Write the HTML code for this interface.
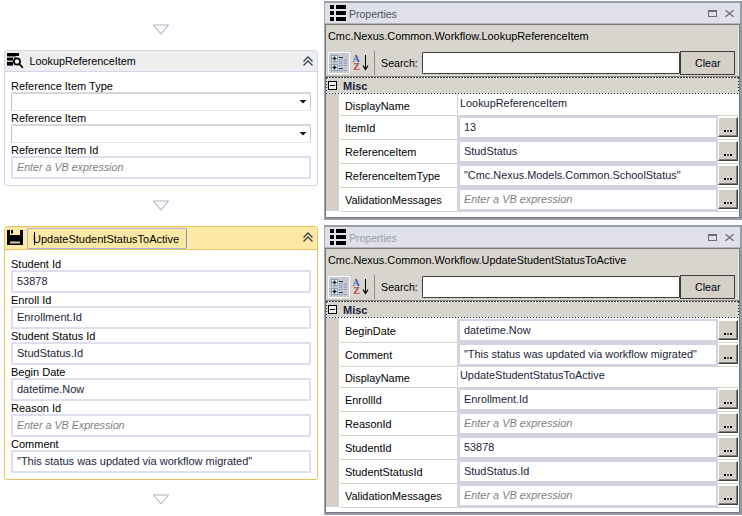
<!DOCTYPE html>
<html><head><meta charset="utf-8">
<style>
*{margin:0;padding:0;box-sizing:border-box}
html,body{width:742px;height:516px;overflow:hidden;background:#fff;font-family:"Liberation Sans",sans-serif}
.a{position:absolute}
.t{position:absolute;white-space:nowrap;font-size:11px;line-height:13px;color:#000}
.g{font-size:10.9px}
.v{color:#1b2538}
.ph{font-style:italic;color:#7f7f7f}
</style></head><body>

<svg class="a" style="left:0;top:0" width="320" height="516">
<path d="M153.5 25 L168.5 25 L161 34 Z" fill="none" stroke="#a9b3c5" stroke-width="1.1" stroke-linejoin="round"/>
<path d="M153.5 201 L168.5 201 L161 210 Z" fill="none" stroke="#a9b3c5" stroke-width="1.1" stroke-linejoin="round"/>
<path d="M153.5 495 L168.5 495 L161 504 Z" fill="none" stroke="#a9b3c5" stroke-width="1.1" stroke-linejoin="round"/>
</svg>
<div class="a" style="left:4px;top:50px;width:314px;height:136px;border:1px solid #d3d6e8;border-radius:3px;background:#fff"></div>
<div class="a" style="left:5px;top:51px;width:312px;height:21px;background:#eeeeee;border-bottom:1px solid #d3d6e8;border-radius:2px 2px 0 0"></div>
<svg class="a" style="left:0;top:46px" width="30" height="26">
<rect x="7" y="7" width="12" height="3" fill="#000"/>
<rect x="7" y="10" width="9" height="2" fill="#8c8c8c"/>
<rect x="7" y="12" width="6" height="2.6" fill="#000"/>
<rect x="7" y="14.6" width="6" height="1" fill="#9a9a9a"/>
<rect x="7" y="16" width="6" height="3.6" fill="#000"/>
<circle cx="17" cy="15.5" r="3.1" fill="#f4f4f4" stroke="#000" stroke-width="1.7"/>
<path d="M19.3 18 L22.3 21.2" stroke="#000" stroke-width="1.8" stroke-linecap="round"/>
</svg>
<div class="t " style="left:29.5px;top:54.5px;font-size:10.8px">LookupReferenceItem</div>
<svg class="a" style="left:300px;top:53px" width="16" height="16"><path d="M3.5 8.5 L8 4 L12.5 8.5 M3.5 12.5 L8 8 L12.5 12.5" fill="none" stroke="#3a4657" stroke-width="1.4"/></svg>
<div class="t " style="left:11px;top:79.5px;">Reference Item Type</div>
<div class="a" style="left:11px;top:92px;width:300px;height:19px;border:1px solid #e4e4ea;border-left-color:#bcbfcd;border-right-color:#c4c6d0;border-top:2px solid #d6d6da;border-radius:2px;background:#fff"></div>
<svg class="a" style="left:299px;top:99px" width="9" height="6"><path d="M0.5 1 L7.5 1 L4 4.5 Z" fill="#15182a"/></svg>
<div class="t " style="left:11px;top:111.5px;">Reference Item</div>
<div class="a" style="left:11px;top:124px;width:300px;height:19px;border:1px solid #e4e4ea;border-left-color:#bcbfcd;border-right-color:#c4c6d0;border-top:2px solid #d6d6da;border-radius:2px;background:#fff"></div>
<svg class="a" style="left:299px;top:131px" width="9" height="6"><path d="M0.5 1 L7.5 1 L4 4.5 Z" fill="#15182a"/></svg>
<div class="t " style="left:11px;top:143.5px;">Reference Item Id</div>
<div class="a" style="left:11px;top:156px;width:300px;height:23px;border:2px solid #dedeee;border-radius:1px;background:#fff"></div>
<div class="t ph" style="left:17px;top:160.5px;font-size:10.7px">Enter a VB expression</div>
<div class="a" style="left:4px;top:226px;width:314px;height:254px;border:1px solid #e9c262;border-radius:3px;background:#fff"></div>
<div class="a" style="left:5px;top:227px;width:312px;height:23px;background:#fde8a6;border-bottom:1px solid #e9c262;border-radius:2px 2px 0 0"></div>
<svg class="a" style="left:7px;top:230px" width="16" height="16">
<path d="M0 0 H3 V5 H13 V0 H16 V15 H0 Z" fill="#000"/>
<rect x="4" y="0" width="2" height="3.5" fill="#000"/>
<rect x="3" y="11.5" width="10" height="2" fill="#dccb94"/>
</svg>
<div class="a" style="left:27px;top:228px;width:160px;height:21px;border:1px solid #a2b1da;border-right-color:#8494c8;border-radius:2px;background:#fde8a6"></div>
<div class="a" style="left:34px;top:232px;width:1px;height:13px;background:#111"></div>
<div class="t " style="left:33px;top:232.5px;">UpdateStudentStatusToActive</div>
<svg class="a" style="left:300px;top:229px" width="16" height="16"><path d="M3.5 8.5 L8 4 L12.5 8.5 M3.5 12.5 L8 8 L12.5 12.5" fill="none" stroke="#3a4657" stroke-width="1.4"/></svg>
<div class="t " style="left:11px;top:257.5px;">Student Id</div>
<div class="a" style="left:11px;top:270px;width:300px;height:23px;border:2px solid #dedeee;border-radius:1px;background:#fff"></div>
<div class="t v" style="left:17px;top:274.5px;">53878</div>
<div class="t " style="left:11px;top:293.5px;">Enroll Id</div>
<div class="a" style="left:11px;top:306px;width:300px;height:23px;border:2px solid #dedeee;border-radius:1px;background:#fff"></div>
<div class="t v" style="left:17px;top:310.5px;">Enrollment.Id</div>
<div class="t " style="left:11px;top:329.5px;">Student Status Id</div>
<div class="a" style="left:11px;top:342px;width:300px;height:23px;border:2px solid #dedeee;border-radius:1px;background:#fff"></div>
<div class="t v" style="left:17px;top:346.5px;">StudStatus.Id</div>
<div class="t " style="left:11px;top:365.5px;">Begin Date</div>
<div class="a" style="left:11px;top:378px;width:300px;height:23px;border:2px solid #dedeee;border-radius:1px;background:#fff"></div>
<div class="t v" style="left:17px;top:382.5px;">datetime.Now</div>
<div class="t " style="left:11px;top:401.5px;">Reason Id</div>
<div class="a" style="left:11px;top:414px;width:300px;height:23px;border:2px solid #dedeee;border-radius:1px;background:#fff"></div>
<div class="t ph" style="left:17px;top:418.5px;font-size:10.7px">Enter a VB Expression</div>
<div class="t " style="left:11px;top:437.5px;">Comment</div>
<div class="a" style="left:11px;top:450px;width:300px;height:23px;border:2px solid #dedeee;border-radius:1px;background:#fff"></div>
<div class="t v" style="left:17px;top:454.5px;">"This status was updated via workflow migrated"</div>
<div class="a" style="left:324px;top:1px;width:418px;height:219px;border:2px solid #979ca8;border-left:1px solid #a3a9b6;background:#e0e0e9"></div>
<div class="a" style="left:325px;top:25px;width:415px;height:193px;border:1px solid #77787d;border-top:0;background:#d8d5cf"></div>
<div class="a" style="left:325px;top:23px;width:415px;height:1px;background:#b4b5bc"></div>
<div class="a" style="left:325px;top:24px;width:415px;height:1px;background:#78797e"></div>
<svg class="a" style="left:330px;top:5px" width="17" height="16">
<rect x="0" y="0" width="4" height="4" fill="#000"/><rect x="6" y="0" width="10" height="4" fill="#000"/>
<rect x="0" y="6" width="4" height="4" fill="#000"/><rect x="6" y="6" width="10" height="4" fill="#000"/>
<rect x="0" y="12" width="4" height="4" fill="#000"/><rect x="6" y="12" width="10" height="4" fill="#000"/>
</svg>
<div class="t " style="left:349px;top:7.5px;font-size:10.5px;color:#4e5567">Properties</div>
<svg class="a" style="left:706px;top:8px" width="32" height="12">
<rect x="2.5" y="2.5" width="8" height="6" fill="none" stroke="#6c6c74" stroke-width="1"/><rect x="2" y="2" width="9" height="2" fill="#6c6c74"/>
<path d="M19.6 2.3 L27.6 8.8 M27.6 2.3 L19.6 8.8" stroke="#6c6c74" stroke-width="1.3"/>
</svg>
<div class="a" style="left:738px;top:25px;width:1px;height:191px;background:#efede9"></div>
<div class="t " style="left:328px;top:29.5px;font-size:10.9px">Cmc.Nexus.Common.Workflow.LookupReferenceItem</div>
<svg class="a" style="left:328px;top:51px" width="48" height="25">
<rect x="0.5" y="1.5" width="21" height="21" fill="#c9c8cc" stroke="#fff" stroke-width="1"/>
<rect x="3.5" y="4.5" width="6" height="6" fill="#fff" stroke="#7aa0c8" stroke-width="1"/>
<path d="M6.5 5.5 V9.5 M4.5 7.5 H8.5" stroke="#000" stroke-width="1.4"/>
<rect x="3.5" y="13.5" width="6" height="6" fill="#fff" stroke="#7aa0c8" stroke-width="1"/>
<path d="M6.5 14.5 V18.5 M4.5 16.5 H8.5" stroke="#000" stroke-width="1.4"/>
<rect x="11" y="6" width="4" height="1" fill="#333"/>
<rect x="11" y="8" width="4" height="1" fill="#8aa4cc"/><rect x="16" y="8" width="3" height="1" fill="#8aa4cc"/>
<rect x="11" y="10" width="4" height="1" fill="#8aa4cc"/><rect x="16" y="10" width="3" height="1" fill="#8aa4cc"/>
<rect x="11" y="12" width="4" height="1" fill="#8aa4cc"/><rect x="16" y="12" width="3" height="1" fill="#8aa4cc"/>
<rect x="11" y="14" width="4" height="1" fill="#8aa4cc"/><rect x="16" y="14" width="3" height="1" fill="#8aa4cc"/>
<rect x="11" y="17" width="4" height="1" fill="#333"/>
<rect x="11" y="19" width="4" height="1" fill="#8aa4cc"/><rect x="16" y="19" width="3" height="1" fill="#8aa4cc"/>
<text x="24.6" y="11" font-family="Liberation Serif" font-weight="bold" font-size="10" fill="#3a62b6">A</text>
<text x="25.2" y="19" font-family="Liberation Serif" font-weight="bold" font-size="10" fill="#b4403c">Z</text>
<path d="M37.5 4 V17" stroke="#000" stroke-width="1"/><path d="M35 14.5 L37.5 18.5 L40 14.5" fill="none" stroke="#000" stroke-width="1.2"/>
<rect x="46" y="0" width="1" height="24" fill="#8c8c8c"/>
</svg>
<div class="t " style="left:381px;top:56.5px;font-size:10.7px">Search:</div>
<div class="a" style="left:422px;top:52px;width:258px;height:22px;border:1px solid #3f3f3f;border-radius:1px;background:#fff"></div>
<div class="a" style="left:680px;top:51px;width:55px;height:24px;border:1px solid #3c3c3c;background:#d4d0c8"></div>
<div class="t " style="left:695px;top:56.5px;font-size:10.7px">Clear</div>
<div class="a" style="left:326px;top:94px;width:413px;height:123px;background:#fff"></div>
<div class="a" style="left:326px;top:76px;width:413px;height:1px;background:#8a8a8a"></div>
<div class="a" style="left:326px;top:77px;width:413px;height:1px;background:repeating-linear-gradient(90deg,#3a3a3a 0 2px,#f4f4f4 2px 3px)"></div>
<div class="a" style="left:326px;top:93px;width:413px;height:1px;background:repeating-linear-gradient(90deg,#222 0 1px,#f0f0f0 1px 3px)"></div>
<div class="a" style="left:326px;top:78px;width:1px;height:15px;background:repeating-linear-gradient(180deg,#222 0 1px,#f0f0f0 1px 3px)"></div>
<div class="a" style="left:738px;top:78px;width:1px;height:15px;background:repeating-linear-gradient(180deg,#222 0 1px,#f0f0f0 1px 3px)"></div>
<div class="a" style="left:328px;top:81px;width:9px;height:9px;border:1px solid #000;background:#f2f2f2"></div>
<div class="a" style="left:330px;top:85px;width:5px;height:1px;background:#000"></div>
<div class="t " style="left:343px;top:79.5px;font-weight:bold;font-size:11px;color:#1d1c3c">Misc</div>
<div class="a" style="left:326px;top:94px;width:13px;height:117px;background:#d4d0c8"></div>
<div class="a" style="left:457px;top:94px;width:1px;height:117px;background:#d8d4cc"></div>
<div class="a" style="left:340px;top:115px;width:398px;height:1px;background:#d8d4cc"></div>
<div class="t g" style="left:345px;top:99.5px;">DisplayName</div>
<div class="t g v" style="left:460px;top:96.5px;">LookupReferenceItem</div>
<div class="a" style="left:340px;top:139px;width:398px;height:1px;background:#d8d4cc"></div>
<div class="t g" style="left:345px;top:121.5px;">ItemId</div>
<div class="a" style="left:458px;top:116px;width:260px;height:23px;border:2px solid #d2d2e6;border-radius:1px;background:#fff"></div>
<div class="t g v" style="left:464px;top:120.5px;">13</div>
<div class="a" style="left:718px;top:117px;width:20px;height:20px;background:#d4d0c8;border-top:1px solid #fff;border-left:1px solid #fff;border-right:1px solid #404040;border-bottom:1px solid #404040;box-shadow:inset -1px -1px 0 #808080"></div>
<svg class="a" style="left:723px;top:130px" width="10" height="3"><rect x="1" y="0" width="2" height="2" fill="#000"/><rect x="4" y="0" width="2" height="2" fill="#555"/><rect x="7" y="0" width="2" height="2" fill="#000"/></svg>
<div class="a" style="left:340px;top:163px;width:398px;height:1px;background:#d8d4cc"></div>
<div class="t g" style="left:345px;top:145.5px;">ReferenceItem</div>
<div class="a" style="left:458px;top:140px;width:260px;height:23px;border:2px solid #d2d2e6;border-radius:1px;background:#fff"></div>
<div class="t g v" style="left:464px;top:144.5px;">StudStatus</div>
<div class="a" style="left:718px;top:141px;width:20px;height:20px;background:#d4d0c8;border-top:1px solid #fff;border-left:1px solid #fff;border-right:1px solid #404040;border-bottom:1px solid #404040;box-shadow:inset -1px -1px 0 #808080"></div>
<svg class="a" style="left:723px;top:154px" width="10" height="3"><rect x="1" y="0" width="2" height="2" fill="#000"/><rect x="4" y="0" width="2" height="2" fill="#555"/><rect x="7" y="0" width="2" height="2" fill="#000"/></svg>
<div class="a" style="left:340px;top:187px;width:398px;height:1px;background:#d8d4cc"></div>
<div class="t g" style="left:345px;top:169.5px;">ReferenceItemType</div>
<div class="a" style="left:458px;top:164px;width:260px;height:23px;border:2px solid #d2d2e6;border-radius:1px;background:#fff"></div>
<div class="t g v" style="left:464px;top:168.5px;">"Cmc.Nexus.Models.Common.SchoolStatus"</div>
<div class="a" style="left:718px;top:165px;width:20px;height:20px;background:#d4d0c8;border-top:1px solid #fff;border-left:1px solid #fff;border-right:1px solid #404040;border-bottom:1px solid #404040;box-shadow:inset -1px -1px 0 #808080"></div>
<svg class="a" style="left:723px;top:178px" width="10" height="3"><rect x="1" y="0" width="2" height="2" fill="#000"/><rect x="4" y="0" width="2" height="2" fill="#555"/><rect x="7" y="0" width="2" height="2" fill="#000"/></svg>
<div class="a" style="left:340px;top:211px;width:398px;height:1px;background:#d8d4cc"></div>
<div class="t g" style="left:345px;top:193.5px;">ValidationMessages</div>
<div class="a" style="left:458px;top:188px;width:260px;height:23px;border:2px solid #d2d2e6;border-radius:1px;background:#fff"></div>
<div class="t g ph" style="left:464px;top:192.5px;">Enter a VB expression</div>
<div class="a" style="left:718px;top:189px;width:20px;height:20px;background:#d4d0c8;border-top:1px solid #fff;border-left:1px solid #fff;border-right:1px solid #404040;border-bottom:1px solid #404040;box-shadow:inset -1px -1px 0 #808080"></div>
<svg class="a" style="left:723px;top:202px" width="10" height="3"><rect x="1" y="0" width="2" height="2" fill="#000"/><rect x="4" y="0" width="2" height="2" fill="#555"/><rect x="7" y="0" width="2" height="2" fill="#000"/></svg>
<div class="a" style="left:324px;top:225px;width:418px;height:290px;border:2px solid #979ca8;border-left:1px solid #a3a9b6;background:#e0e0e9"></div>
<div class="a" style="left:325px;top:249px;width:415px;height:264px;border:1px solid #77787d;border-top:0;background:#d8d5cf"></div>
<div class="a" style="left:325px;top:247px;width:415px;height:1px;background:#b4b5bc"></div>
<div class="a" style="left:325px;top:248px;width:415px;height:1px;background:#78797e"></div>
<svg class="a" style="left:330px;top:229px" width="17" height="16">
<rect x="0" y="0" width="4" height="4" fill="#000"/><rect x="6" y="0" width="10" height="4" fill="#000"/>
<rect x="0" y="6" width="4" height="4" fill="#000"/><rect x="6" y="6" width="10" height="4" fill="#000"/>
<rect x="0" y="12" width="4" height="4" fill="#000"/><rect x="6" y="12" width="10" height="4" fill="#000"/>
</svg>
<div class="t " style="left:349px;top:231.5px;font-size:10.5px;color:#9a9fae">Properties</div>
<svg class="a" style="left:706px;top:232px" width="32" height="12">
<rect x="2.5" y="2.5" width="8" height="6" fill="none" stroke="#6c6c74" stroke-width="1"/><rect x="2" y="2" width="9" height="2" fill="#6c6c74"/>
<path d="M19.6 2.3 L27.6 8.8 M27.6 2.3 L19.6 8.8" stroke="#6c6c74" stroke-width="1.3"/>
</svg>
<div class="a" style="left:738px;top:249px;width:1px;height:262px;background:#efede9"></div>
<div class="t " style="left:328px;top:253.5px;font-size:10.9px">Cmc.Nexus.Common.Workflow.UpdateStudentStatusToActive</div>
<svg class="a" style="left:328px;top:275px" width="48" height="25">
<rect x="0.5" y="1.5" width="21" height="21" fill="#c9c8cc" stroke="#fff" stroke-width="1"/>
<rect x="3.5" y="4.5" width="6" height="6" fill="#fff" stroke="#7aa0c8" stroke-width="1"/>
<path d="M6.5 5.5 V9.5 M4.5 7.5 H8.5" stroke="#000" stroke-width="1.4"/>
<rect x="3.5" y="13.5" width="6" height="6" fill="#fff" stroke="#7aa0c8" stroke-width="1"/>
<path d="M6.5 14.5 V18.5 M4.5 16.5 H8.5" stroke="#000" stroke-width="1.4"/>
<rect x="11" y="6" width="4" height="1" fill="#333"/>
<rect x="11" y="8" width="4" height="1" fill="#8aa4cc"/><rect x="16" y="8" width="3" height="1" fill="#8aa4cc"/>
<rect x="11" y="10" width="4" height="1" fill="#8aa4cc"/><rect x="16" y="10" width="3" height="1" fill="#8aa4cc"/>
<rect x="11" y="12" width="4" height="1" fill="#8aa4cc"/><rect x="16" y="12" width="3" height="1" fill="#8aa4cc"/>
<rect x="11" y="14" width="4" height="1" fill="#8aa4cc"/><rect x="16" y="14" width="3" height="1" fill="#8aa4cc"/>
<rect x="11" y="17" width="4" height="1" fill="#333"/>
<rect x="11" y="19" width="4" height="1" fill="#8aa4cc"/><rect x="16" y="19" width="3" height="1" fill="#8aa4cc"/>
<text x="24.6" y="11" font-family="Liberation Serif" font-weight="bold" font-size="10" fill="#3a62b6">A</text>
<text x="25.2" y="19" font-family="Liberation Serif" font-weight="bold" font-size="10" fill="#b4403c">Z</text>
<path d="M37.5 4 V17" stroke="#000" stroke-width="1"/><path d="M35 14.5 L37.5 18.5 L40 14.5" fill="none" stroke="#000" stroke-width="1.2"/>
<rect x="46" y="0" width="1" height="24" fill="#8c8c8c"/>
</svg>
<div class="t " style="left:381px;top:280.5px;font-size:10.7px">Search:</div>
<div class="a" style="left:422px;top:276px;width:258px;height:22px;border:1px solid #3f3f3f;border-radius:1px;background:#fff"></div>
<div class="a" style="left:680px;top:275px;width:55px;height:24px;border:1px solid #3c3c3c;background:#d4d0c8"></div>
<div class="t " style="left:695px;top:280.5px;font-size:10.7px">Clear</div>
<div class="a" style="left:326px;top:318px;width:413px;height:194px;background:#fff"></div>
<div class="a" style="left:326px;top:300px;width:413px;height:1px;background:#8a8a8a"></div>
<div class="a" style="left:326px;top:301px;width:413px;height:1px;background:repeating-linear-gradient(90deg,#3a3a3a 0 2px,#f4f4f4 2px 3px)"></div>
<div class="a" style="left:326px;top:317px;width:413px;height:1px;background:repeating-linear-gradient(90deg,#222 0 1px,#f0f0f0 1px 3px)"></div>
<div class="a" style="left:326px;top:302px;width:1px;height:15px;background:repeating-linear-gradient(180deg,#222 0 1px,#f0f0f0 1px 3px)"></div>
<div class="a" style="left:738px;top:302px;width:1px;height:15px;background:repeating-linear-gradient(180deg,#222 0 1px,#f0f0f0 1px 3px)"></div>
<div class="a" style="left:328px;top:305px;width:9px;height:9px;border:1px solid #000;background:#f2f2f2"></div>
<div class="a" style="left:330px;top:309px;width:5px;height:1px;background:#000"></div>
<div class="t " style="left:343px;top:303.5px;font-weight:bold;font-size:11px;color:#1d1c3c">Misc</div>
<div class="a" style="left:326px;top:318px;width:13px;height:189px;background:#d4d0c8"></div>
<div class="a" style="left:457px;top:318px;width:1px;height:189px;background:#d8d4cc"></div>
<div class="a" style="left:340px;top:342px;width:398px;height:1px;background:#d8d4cc"></div>
<div class="t g" style="left:345px;top:324.5px;">BeginDate</div>
<div class="a" style="left:458px;top:319px;width:260px;height:23px;border:2px solid #d2d2e6;border-radius:1px;background:#fff"></div>
<div class="t g v" style="left:464px;top:323.5px;">datetime.Now</div>
<div class="a" style="left:718px;top:320px;width:20px;height:20px;background:#d4d0c8;border-top:1px solid #fff;border-left:1px solid #fff;border-right:1px solid #404040;border-bottom:1px solid #404040;box-shadow:inset -1px -1px 0 #808080"></div>
<svg class="a" style="left:723px;top:333px" width="10" height="3"><rect x="1" y="0" width="2" height="2" fill="#000"/><rect x="4" y="0" width="2" height="2" fill="#555"/><rect x="7" y="0" width="2" height="2" fill="#000"/></svg>
<div class="a" style="left:340px;top:366px;width:398px;height:1px;background:#d8d4cc"></div>
<div class="t g" style="left:345px;top:348.5px;">Comment</div>
<div class="a" style="left:458px;top:343px;width:260px;height:23px;border:2px solid #d2d2e6;border-radius:1px;background:#fff"></div>
<div class="t g v" style="left:464px;top:347.5px;">"This status was updated via workflow migrated"</div>
<div class="a" style="left:718px;top:344px;width:20px;height:20px;background:#d4d0c8;border-top:1px solid #fff;border-left:1px solid #fff;border-right:1px solid #404040;border-bottom:1px solid #404040;box-shadow:inset -1px -1px 0 #808080"></div>
<svg class="a" style="left:723px;top:357px" width="10" height="3"><rect x="1" y="0" width="2" height="2" fill="#000"/><rect x="4" y="0" width="2" height="2" fill="#555"/><rect x="7" y="0" width="2" height="2" fill="#000"/></svg>
<div class="a" style="left:340px;top:387px;width:398px;height:1px;background:#d8d4cc"></div>
<div class="t g" style="left:345px;top:371.5px;">DisplayName</div>
<div class="t g v" style="left:460px;top:368.5px;">UpdateStudentStatusToActive</div>
<div class="a" style="left:340px;top:411px;width:398px;height:1px;background:#d8d4cc"></div>
<div class="t g" style="left:345px;top:393.5px;">EnrollId</div>
<div class="a" style="left:458px;top:388px;width:260px;height:23px;border:2px solid #d2d2e6;border-radius:1px;background:#fff"></div>
<div class="t g v" style="left:464px;top:392.5px;">Enrollment.Id</div>
<div class="a" style="left:718px;top:389px;width:20px;height:20px;background:#d4d0c8;border-top:1px solid #fff;border-left:1px solid #fff;border-right:1px solid #404040;border-bottom:1px solid #404040;box-shadow:inset -1px -1px 0 #808080"></div>
<svg class="a" style="left:723px;top:402px" width="10" height="3"><rect x="1" y="0" width="2" height="2" fill="#000"/><rect x="4" y="0" width="2" height="2" fill="#555"/><rect x="7" y="0" width="2" height="2" fill="#000"/></svg>
<div class="a" style="left:340px;top:435px;width:398px;height:1px;background:#d8d4cc"></div>
<div class="t g" style="left:345px;top:417.5px;">ReasonId</div>
<div class="a" style="left:458px;top:412px;width:260px;height:23px;border:2px solid #d2d2e6;border-radius:1px;background:#fff"></div>
<div class="t g ph" style="left:464px;top:416.5px;">Enter a VB expression</div>
<div class="a" style="left:718px;top:413px;width:20px;height:20px;background:#d4d0c8;border-top:1px solid #fff;border-left:1px solid #fff;border-right:1px solid #404040;border-bottom:1px solid #404040;box-shadow:inset -1px -1px 0 #808080"></div>
<svg class="a" style="left:723px;top:426px" width="10" height="3"><rect x="1" y="0" width="2" height="2" fill="#000"/><rect x="4" y="0" width="2" height="2" fill="#555"/><rect x="7" y="0" width="2" height="2" fill="#000"/></svg>
<div class="a" style="left:340px;top:459px;width:398px;height:1px;background:#d8d4cc"></div>
<div class="t g" style="left:345px;top:441.5px;">StudentId</div>
<div class="a" style="left:458px;top:436px;width:260px;height:23px;border:2px solid #d2d2e6;border-radius:1px;background:#fff"></div>
<div class="t g v" style="left:464px;top:440.5px;">53878</div>
<div class="a" style="left:718px;top:437px;width:20px;height:20px;background:#d4d0c8;border-top:1px solid #fff;border-left:1px solid #fff;border-right:1px solid #404040;border-bottom:1px solid #404040;box-shadow:inset -1px -1px 0 #808080"></div>
<svg class="a" style="left:723px;top:450px" width="10" height="3"><rect x="1" y="0" width="2" height="2" fill="#000"/><rect x="4" y="0" width="2" height="2" fill="#555"/><rect x="7" y="0" width="2" height="2" fill="#000"/></svg>
<div class="a" style="left:340px;top:483px;width:398px;height:1px;background:#d8d4cc"></div>
<div class="t g" style="left:345px;top:465.5px;">StudentStatusId</div>
<div class="a" style="left:458px;top:460px;width:260px;height:23px;border:2px solid #d2d2e6;border-radius:1px;background:#fff"></div>
<div class="t g v" style="left:464px;top:464.5px;">StudStatus.Id</div>
<div class="a" style="left:718px;top:461px;width:20px;height:20px;background:#d4d0c8;border-top:1px solid #fff;border-left:1px solid #fff;border-right:1px solid #404040;border-bottom:1px solid #404040;box-shadow:inset -1px -1px 0 #808080"></div>
<svg class="a" style="left:723px;top:474px" width="10" height="3"><rect x="1" y="0" width="2" height="2" fill="#000"/><rect x="4" y="0" width="2" height="2" fill="#555"/><rect x="7" y="0" width="2" height="2" fill="#000"/></svg>
<div class="a" style="left:340px;top:507px;width:398px;height:1px;background:#d8d4cc"></div>
<div class="t g" style="left:345px;top:489.5px;">ValidationMessages</div>
<div class="a" style="left:458px;top:484px;width:260px;height:23px;border:2px solid #d2d2e6;border-radius:1px;background:#fff"></div>
<div class="t g ph" style="left:464px;top:488.5px;">Enter a VB expression</div>
<div class="a" style="left:718px;top:485px;width:20px;height:20px;background:#d4d0c8;border-top:1px solid #fff;border-left:1px solid #fff;border-right:1px solid #404040;border-bottom:1px solid #404040;box-shadow:inset -1px -1px 0 #808080"></div>
<svg class="a" style="left:723px;top:498px" width="10" height="3"><rect x="1" y="0" width="2" height="2" fill="#000"/><rect x="4" y="0" width="2" height="2" fill="#555"/><rect x="7" y="0" width="2" height="2" fill="#000"/></svg>
</body></html>
